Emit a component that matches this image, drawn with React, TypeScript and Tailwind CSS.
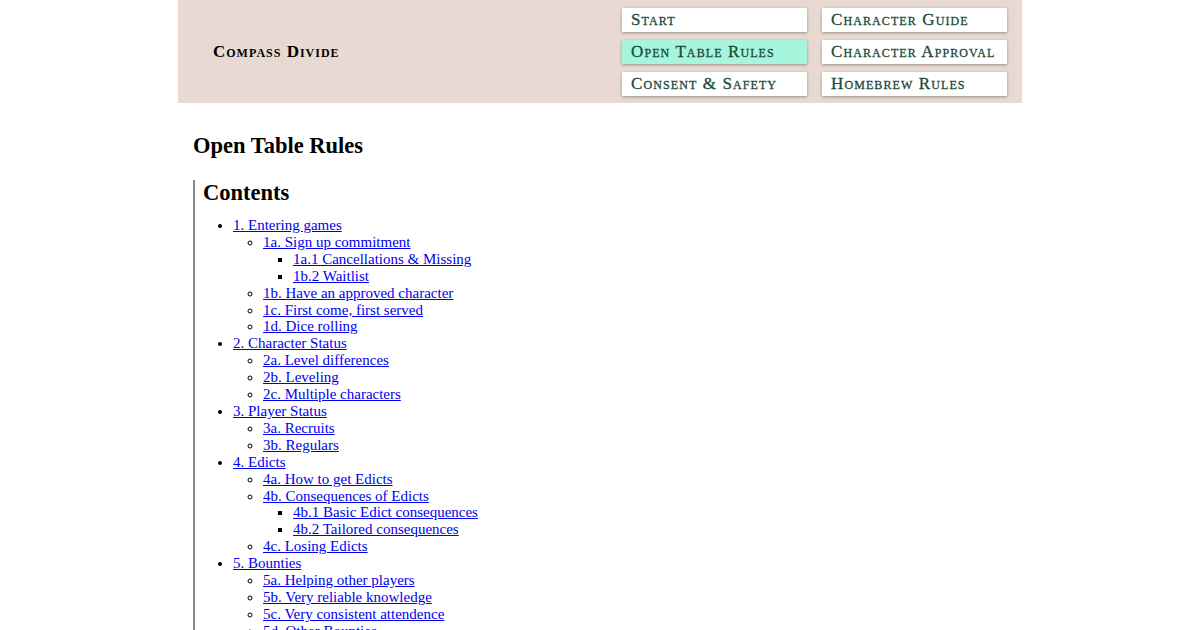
import React from 'react';

type Item = { label: string; children?: Item[] };

const NAV = [
  { label: 'Start', active: false },
  { label: 'Character Guide', active: false },
  { label: 'Open Table Rules', active: true },
  { label: 'Character Approval', active: false },
  { label: 'Consent & Safety', active: false },
  { label: 'Homebrew Rules', active: false },
];

const TOC: Item[] = [
  {
    label: '1. Entering games',
    children: [
      {
        label: '1a. Sign up commitment',
        children: [{ label: '1a.1 Cancellations & Missing' }, { label: '1b.2 Waitlist' }],
      },
      { label: '1b. Have an approved character' },
      { label: '1c. First come, first served' },
      { label: '1d. Dice rolling' },
    ],
  },
  {
    label: '2. Character Status',
    children: [
      { label: '2a. Level differences' },
      { label: '2b. Leveling' },
      { label: '2c. Multiple characters' },
    ],
  },
  {
    label: '3. Player Status',
    children: [{ label: '3a. Recruits' }, { label: '3b. Regulars' }],
  },
  {
    label: '4. Edicts',
    children: [
      { label: '4a. How to get Edicts' },
      {
        label: '4b. Consequences of Edicts',
        children: [{ label: '4b.1 Basic Edict consequences' }, { label: '4b.2 Tailored consequences' }],
      },
      { label: '4c. Losing Edicts' },
    ],
  },
  {
    label: '5. Bounties',
    children: [
      { label: '5a. Helping other players' },
      { label: '5b. Very reliable knowledge' },
      { label: '5c. Very consistent attendence' },
      { label: '5d. Other Bounties' },
    ],
  },
];

const listStyles = ['list-disc', 'list-[circle]', 'list-[square]'];

const TocList: React.FC<{ items: Item[]; depth: number }> = ({ items, depth }) => (
  <ul className={`${listStyles[depth]} pl-[30px]`}>
    {items.map((item) => (
      <li key={item.label}>
        <a href="#" className="text-[#0000ee] underline">
          {item.label}
        </a>
        {item.children && <TocList items={item.children} depth={depth + 1} />}
      </li>
    ))}
  </ul>
);

export default function App() {
  return (
    <div className="min-h-[630px] bg-white font-['Liberation_Serif',serif] text-black">
      <div className="mx-auto w-[844px]">
        <header className="flex h-[103px] items-center justify-between bg-[#e8dad3] pl-[35px] pr-[15px]">
          <div className="text-[17px] font-bold tracking-[1px] [font-variant:small-caps]">Compass Divide</div>
          <nav className="grid grid-cols-2 gap-x-[15px] gap-y-[8px]">
            {NAV.map((n) => (
              <a
                key={n.label}
                href="#"
                className={`flex h-[24px] w-[185px] items-center pl-[9px] text-[17px] font-medium leading-none tracking-[1.1px] text-[#1c4a3a] [font-variant:small-caps] [-webkit-text-stroke:0.3px_#1c4a3a] shadow-[0_1px_3px_rgba(0,0,0,0.35)] ${
                  n.active ? 'bg-[#a6f5dc]' : 'bg-white'
                }`}
              >
                {n.label}
              </a>
            ))}
          </nav>
        </header>

        <main className="px-[15px]">
          <h1 className="mt-[30px] text-[22.5px] font-bold leading-[25px]">Open Table Rules</h1>
          <section className="mt-[22px] border-l-2 border-[#8a8a8a] pl-[8px]">
            <h2 className="text-[22.5px] font-bold leading-[25px]">Contents</h2>
            <div className="mt-[12px] text-[15px] leading-[16.9px]">
              <TocList items={TOC} depth={0} />
            </div>
          </section>
        </main>
      </div>
    </div>
  );
}
